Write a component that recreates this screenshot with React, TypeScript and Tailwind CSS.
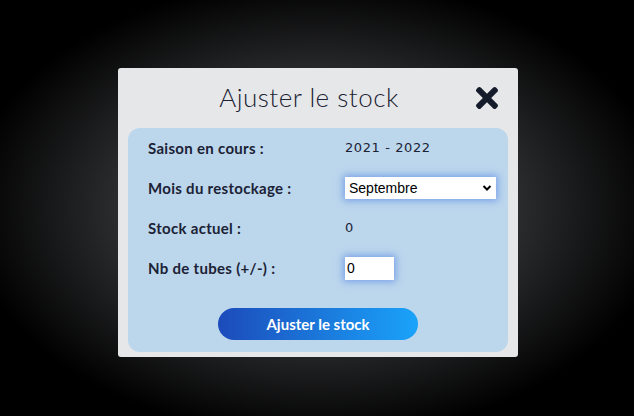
import { FaTimes } from 'react-icons/fa';

const rows = [
  { label: 'Saison en cours :', kind: 'text', value: '2021 - 2022' },
  { label: 'Mois du restockage :', kind: 'select' },
  { label: 'Stock actuel :', kind: 'text', value: '0' },
  { label: 'Nb de tubes (+/-) :', kind: 'input' },
];

export default function App() {
  return (
    <div className="w-[634px] h-[416px] flex items-center justify-center bg-[radial-gradient(ellipse_at_50%_50%,#464849_0%,#2a2b2d_45%,#000_78%)] font-['Lato',sans-serif]">
      <div className="w-[400px] h-[289px] mt-[9px] ml-[2px] bg-[#e6e7e9] rounded-[3px] flex flex-col px-[10px]">
        <div className="h-[60px] relative flex items-center justify-center pr-[18px]">
          <h2 className="text-[26px] font-light text-[#1b2233] tracking-[0.5px] mt-[-2px]">Ajuster le stock</h2>
          <button className="absolute right-[5px] top-[14px] text-[#141b2b]">
            <FaTimes size={32} />
          </button>
        </div>
        <div className="bg-[#bcd6ec] rounded-[12px] pb-3 px-5 flex flex-col">
          {rows.map((r) => (
            <div key={r.label} className="h-10 grid grid-cols-[197px_1fr] items-center">
              <span className="text-[15px] font-bold text-[#1b2235] tracking-[0.3px]">{r.label}</span>
              {r.kind === 'text' && (
                <span className="text-[13px] text-[#1b2235] tracking-[0.6px] font-['DejaVu_Sans',sans-serif]">{r.value}</span>
              )}
              {r.kind === 'select' && (
                <div className="relative w-[151px] h-[22px] bg-white shadow-[0_0_7px_2px_rgba(80,130,230,0.6)] flex items-center">
                  <span className="pl-1 text-[14px] text-black font-['Liberation_Sans',sans-serif]">Septembre</span>
                  <svg className="absolute right-[4px] top-[7px]" width="10" height="8" viewBox="0 0 10 8">
                    <path d="M1.5 2 L5 5.5 L8.5 2" fill="none" stroke="#000" strokeWidth="2" />
                  </svg>
                </div>
              )}
              {r.kind === 'input' && (
                <div className="w-[49px] h-[23px] bg-white shadow-[0_0_7px_2px_rgba(80,130,230,0.6)] flex items-center">
                  <span className="pl-[2px] text-[14px] text-black font-['Liberation_Sans',sans-serif]">0</span>
                </div>
              )}
            </div>
          ))}
          <div className="flex justify-center mt-5">
            <button className="w-[200px] h-8 rounded-full bg-[linear-gradient(90deg,#1c4bba,#1aa3fa)] text-white font-bold text-[15px]">
              Ajuster le stock
            </button>
          </div>
        </div>
      </div>
    </div>
  );
}
